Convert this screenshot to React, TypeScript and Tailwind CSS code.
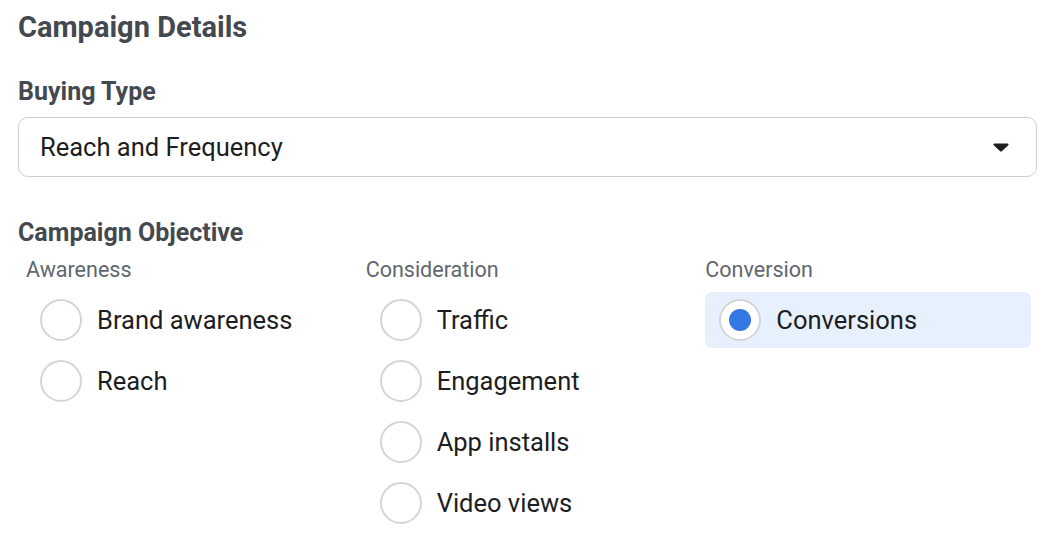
import { useState } from "react";

type Group = { title: string; options: string[] };

const GROUPS: Group[] = [
  { title: "Awareness", options: ["Brand awareness", "Reach"] },
  { title: "Consideration", options: ["Traffic", "Engagement", "App installs", "Video views"] },
  { title: "Conversion", options: ["Conversions"] },
];

function Radio({ checked }: { checked: boolean }) {
  return (
    <span className="flex h-[42px] w-[42px] shrink-0 items-center justify-center rounded-full border-2 border-[#d3d5d8] bg-white">
      {checked && <span className="h-[22px] w-[22px] rounded-full bg-[#3578e5]" />}
    </span>
  );
}

export default function App() {
  const [selected, setSelected] = useState("Conversions");

  return (
    <div className="min-h-screen bg-white pl-[18px] pr-[17px] pt-[11px] font-['Roboto',sans-serif]">
      <h1 className="text-[29px] font-bold leading-[32px] text-[#444950]">Campaign Details</h1>

      <h2 className="mt-[35px] text-[25px] font-bold leading-[28px] text-[#444950]">Buying Type</h2>
      <button className="mt-[11px] flex h-[60px] w-full items-center justify-between rounded-[10px] border-[1.5px] border-[#ccd0d5] bg-white pl-[21px] pr-[27px] text-left">
        <span className="text-[25.5px] leading-[30px] text-[#1c1e21]">Reach and Frequency</span>
        <svg width="16" height="9" viewBox="0 0 16 9" className="mt-[1px]">
          <path d="M1.5 0.5h13a1 1 0 0 1 .75 1.65l-6.4 6.2a1.2 1.2 0 0 1-1.7 0L.75 2.15A1 1 0 0 1 1.5 .5z" fill="#1c1e21" />
        </svg>
      </button>

      <h2 className="mt-[42px] text-[25px] font-bold leading-[28px] text-[#444950]">Campaign Objective</h2>
      <div className="mt-[11px] grid grid-cols-3">
        {GROUPS.map((g) => (
          <div key={g.title} className="pl-[8px] pr-[6px]">
            <div className="text-[21.5px] leading-[24px] text-[#606770]">{g.title}</div>
            <div className="mt-[10px] flex flex-col gap-[5px]">
              {g.options.map((o) => {
                const on = selected === o;
                return (
                  <label
                    key={o}
                    onClick={() => setSelected(o)}
                    className={`flex h-[56px] cursor-pointer items-center gap-[15px] rounded-[6px] pl-[14px] ${
                      on ? "bg-[#e7f0fd]" : ""
                    }`}
                  >
                    <Radio checked={on} />
                    <span className="text-[25.5px] leading-[30px] text-[#1c1e21]">{o}</span>
                  </label>
                );
              })}
            </div>
          </div>
        ))}
      </div>
    </div>
  );
}
